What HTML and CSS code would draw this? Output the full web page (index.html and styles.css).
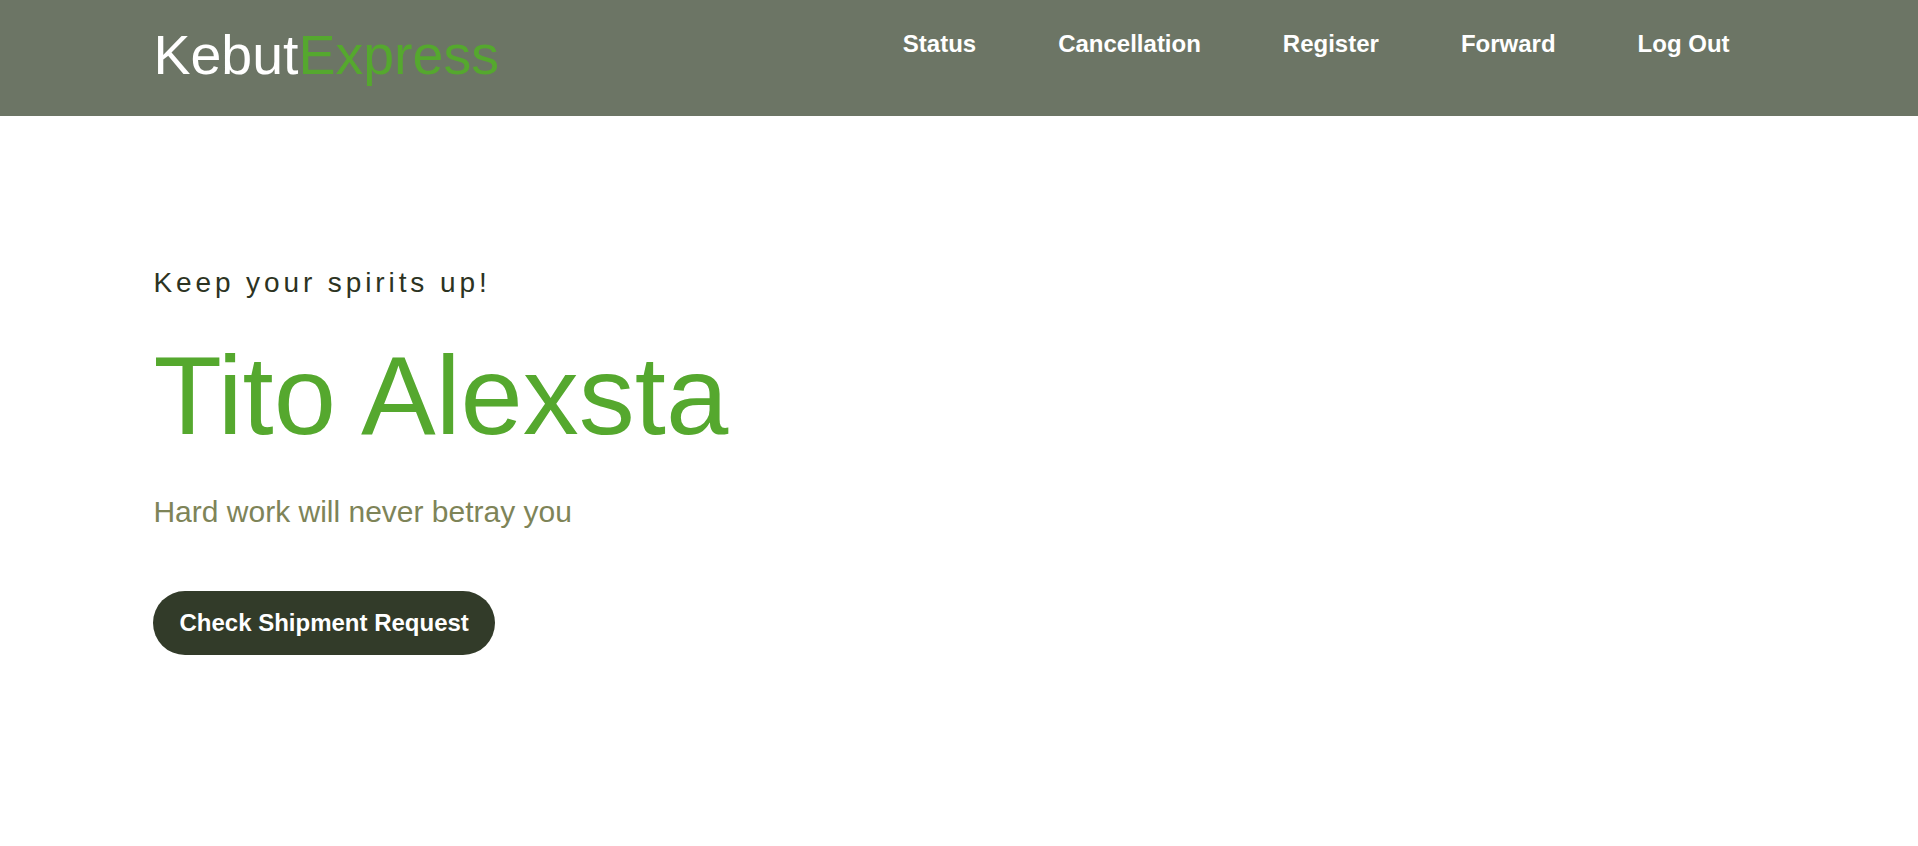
FILE: index.html
```html
<!DOCTYPE html>
<html lang="en">
<head>
<meta charset="utf-8">
<title>KebutExpress</title>
<link rel="stylesheet" href="styles.css">
</head>
<body>
<header class="topbar">
  <a class="brand" href="#"><span class="brand-a">Kebut</span><span class="brand-b">Express</span></a>
  <nav class="menu">
    <a href="#">Status</a>
    <a href="#">Cancellation</a>
    <a href="#">Register</a>
    <a href="#">Forward</a>
    <a href="#">Log Out</a>
  </nav>
</header>
<main class="hero">
  <p class="kicker">Keep your spirits up!</p>
  <h1 class="name">Tito Alexsta</h1>
  <p class="motto">Hard work will never betray you</p>
  <a class="cta" href="#">Check Shipment Request</a>
</main>
</body>
</html>
```
FILE: styles.css
```css
* { box-sizing: border-box; }
html, body { margin: 0; padding: 0; }
body {
  font-family: "Liberation Sans", Arial, sans-serif;
  background: #ffffff;
}
a { text-decoration: none; }
.topbar {
  height: 116px;
  background: #6c7565;
  display: flex;
  justify-content: space-between;
  align-items: flex-start;
  padding: 0 8%;
}
.brand {
  font-size: 55.5px;
  line-height: 1;
  margin-top: 28px;
}
.brand-a { color: #ffffff; }
.brand-b { color: #55a82e; }
.menu {
  display: flex;
  gap: 82px;
  padding-right: 35px;
  margin-top: 30px;
}
.menu a {
  color: #ffffff;
  font-weight: bold;
  font-size: 24px;
  line-height: 28px;
}
.hero {
  padding: 0 8%;
  padding-top: 150px;
}
.kicker {
  margin: 0;
  font-size: 28px;
  letter-spacing: 3.9px;
  color: #2c3322;
  line-height: 1.2;
}
.name {
  margin: 34px 0 0;
  font-size: 112px;
  font-weight: normal;
  color: #55a82e;
  line-height: 1.1;
}
.motto {
  margin: 37px 0 0;
  font-size: 30px;
  color: #7e8458;
  line-height: 1.2;
}
.cta {
  display: inline-block;
  margin-top: 61px;
  background: #323b29;
  color: #ffffff;
  font-weight: bold;
  font-size: 24px;
  line-height: 28px;
  padding: 18px 26px;
  border-radius: 40px;
}
```
